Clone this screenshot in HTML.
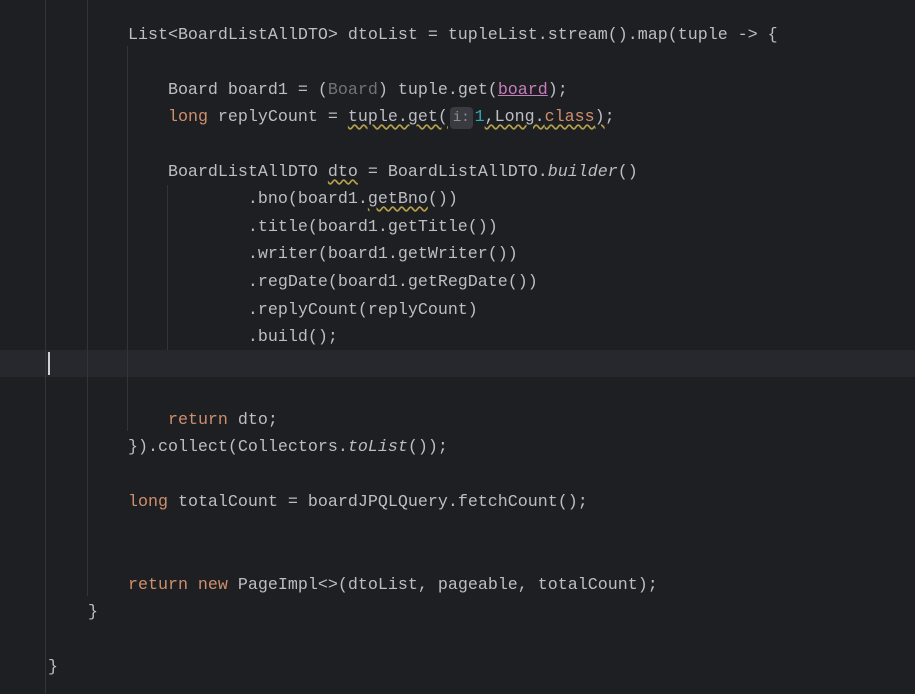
<!DOCTYPE html>
<html><head><meta charset="utf-8"><style>
html,body{margin:0;padding:0;background:#1e1f22;width:915px;height:694px;overflow:hidden}
.l{position:absolute;left:48px;height:27.4px;line-height:27.4px;font-family:"Liberation Mono",monospace;font-size:16.67px;color:#bcbec4;white-space:pre;margin-top:2px}
.k{color:#cf8e6d}.g{color:#6f737a}.p{color:#c77dbb;text-decoration:underline}.n{color:#2aacb8}
.i{font-style:italic}.w{text-decoration:underline wavy #b5a04a;text-underline-offset:3px}
.v{position:absolute;width:1px;background:#313438}
.h{display:inline-block;background:#393b40;color:#8c8f94;border-radius:4px;font-size:14px;line-height:22px;padding:0 3px;margin:0 2px;vertical-align:0px}
</style></head><body>
<div style="position:absolute;left:0;top:350px;width:915px;height:27px;background:#26282e"></div>
<div class="v" style="left:45px;top:0;height:694px"></div>
<div class="v" style="left:87px;top:0;height:596px"></div>
<div class="v" style="left:127px;top:46px;height:385px"></div>
<div class="v" style="left:167px;top:185px;height:165px"></div>
<div style="position:absolute;left:48px;top:352px;width:2px;height:23px;background:#ced0d6"></div>
<div class="l" style="top:20px">        List&lt;BoardListAllDTO&gt; dtoList = tupleList.stream().map(tuple -&gt; {</div>
<div class="l" style="top:75px">            Board board1 = (<span class="g">Board</span>) tuple.get(<span class="p">board</span>);</div>
<div class="l" style="top:102px">            <span class="k">long</span> replyCount = <span class="w">tuple.get(</span><span class="h">i:</span><span class="n">1</span><span class="w">,Long.<span class="k">class</span>)</span>;</div>
<div class="l" style="top:157px">            BoardListAllDTO <span class="w">dto</span> = BoardListAllDTO.<span class="i">builder</span>()</div>
<div class="l" style="top:184px">                    .bno(board1.<span class="w">getBno</span>())</div>
<div class="l" style="top:212px">                    .title(board1.getTitle())</div>
<div class="l" style="top:239px">                    .writer(board1.getWriter())</div>
<div class="l" style="top:267px">                    .regDate(board1.getRegDate())</div>
<div class="l" style="top:295px">                    .replyCount(replyCount)</div>
<div class="l" style="top:322px">                    .build();</div>
<div class="l" style="top:405px">            <span class="k">return</span> dto;</div>
<div class="l" style="top:432px">        }).collect(Collectors.<span class="i">toList</span>());</div>
<div class="l" style="top:487px">        <span class="k">long</span> totalCount = boardJPQLQuery.fetchCount();</div>
<div class="l" style="top:570px">        <span class="k">return new</span> PageImpl&lt;&gt;(dtoList, pageable, totalCount);</div>
<div class="l" style="top:597px">    }</div>
<div class="l" style="top:652px">}</div>
</body></html>
